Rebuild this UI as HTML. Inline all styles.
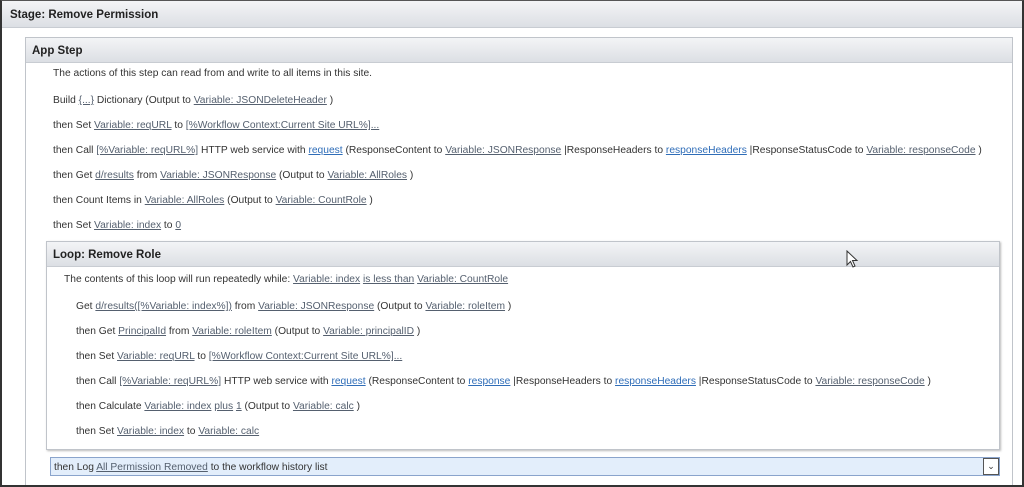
<!DOCTYPE html>
<html style="overflow:hidden;height:487px"><head><style>
body{margin:0;width:1024px;height:487px;overflow:hidden;background:#fff;font-family:"Liberation Sans",sans-serif;font-size:10.25px;color:#333;position:relative}
.abs{position:absolute}
.hdr{background:linear-gradient(#f3f4f6,#dcdfe4);font-weight:bold;font-size:11.5px;color:#222;box-sizing:border-box}
.l{position:absolute;white-space:nowrap;margin-top:1px}
a{color:#55606f;text-decoration:underline}
a.b{color:#2f6db8}
</style></head><body>
<div class="abs hdr" style="left:2px;top:1px;width:1020px;height:27px;border-bottom:1px solid #c8ccd2;padding:8px 0 0 8px">Stage: Remove Permission</div>
<div class="abs" style="left:25px;top:37px;width:988px;height:460px;border:1px solid #c0c4ca;box-sizing:border-box"></div>
<div class="abs hdr" style="left:26px;top:38px;width:986px;height:25px;border-bottom:1px solid #c8ccd2;padding:7px 0 0 6px">App Step</div>
<div class="l" style="left:53px;top:67px">The actions of this step can read from and write to all items in this site.</div>
<div class="l" style="left:53px;top:94px">Build <a>{...}</a> Dictionary (Output to <a>Variable: JSONDeleteHeader</a> )</div>
<div class="l" style="left:53px;top:119px">then Set <a>Variable: reqURL</a> to <a>[%Workflow Context:Current Site URL%]...</a></div>
<div class="l" style="left:53px;top:144px">then Call <a>[%Variable: reqURL%]</a> HTTP web service with <a class="b">request</a> (ResponseContent to <a>Variable: JSONResponse</a> |ResponseHeaders to <a class="b">responseHeaders</a> |ResponseStatusCode to <a>Variable: responseCode</a> )</div>
<div class="l" style="left:53px;top:169px">then Get <a>d/results</a> from <a>Variable: JSONResponse</a> (Output to <a>Variable: AllRoles</a> )</div>
<div class="l" style="left:53px;top:194px">then Count Items in <a>Variable: AllRoles</a> (Output to <a>Variable: CountRole</a> )</div>
<div class="l" style="left:53px;top:219px">then Set <a>Variable: index</a> to <a>0</a></div>
<div class="abs" style="left:46px;top:241px;width:954px;height:209px;border:1px solid #c0c4ca;box-shadow:1px 1px 2px #bbb;box-sizing:border-box"></div>
<div class="abs hdr" style="left:47px;top:242px;width:952px;height:25px;border-bottom:1px solid #c8ccd2;padding:7px 0 0 6px">Loop: Remove Role</div>
<div class="l" style="left:64px;top:273px">The contents of this loop will run repeatedly while: <a>Variable: index</a> <a>is less than</a> <a>Variable: CountRole</a></div>
<div class="l" style="left:76px;top:300px">Get <a>d/results([%Variable: index%])</a> from <a>Variable: JSONResponse</a> (Output to <a>Variable: roleItem</a> )</div>
<div class="l" style="left:76px;top:325px">then Get <a>PrincipalId</a> from <a>Variable: roleItem</a> (Output to <a>Variable: principalID</a> )</div>
<div class="l" style="left:76px;top:350px">then Set <a>Variable: reqURL</a> to <a>[%Workflow Context:Current Site URL%]...</a></div>
<div class="l" style="left:76px;top:375px">then Call <a>[%Variable: reqURL%]</a> HTTP web service with <a class="b">request</a> (ResponseContent to <a class="b">response</a> |ResponseHeaders to <a class="b">responseHeaders</a> |ResponseStatusCode to <a>Variable: responseCode</a> )</div>
<div class="l" style="left:76px;top:400px">then Calculate <a>Variable: index</a> <a>plus</a> <a>1</a> (Output to <a>Variable: calc</a> )</div>
<div class="l" style="left:76px;top:425px">then Set <a>Variable: index</a> to <a>Variable: calc</a></div>
<div class="abs" style="left:50px;top:457px;width:950px;height:19px;background:#e3eefb;border:1px solid #8aa4cc;box-sizing:border-box"></div>
<div class="l" style="left:54px;top:461px">then Log <a>All Permission Removed</a> to the workflow history list</div>
<div class="abs" style="left:983px;top:458px;width:16px;height:17px;background:#fff;border:1px solid #555;box-sizing:border-box;font-size:9px;text-align:center;line-height:15px;color:#333">&#8964;</div>
<svg class="abs" style="left:846px;top:250px" width="14" height="20" viewBox="0 0 14 20"><path d="M1 1 L1 15 L4.5 11.5 L7 17 L9 16 L6.5 10.5 L11 10.5 Z" fill="#fff" stroke="#333" stroke-width="1"/></svg>
<div class="abs" style="left:0;top:0;width:1024px;height:487px;box-sizing:border-box;border:2px solid #333;border-top:1px solid #555"></div>
</body></html>
